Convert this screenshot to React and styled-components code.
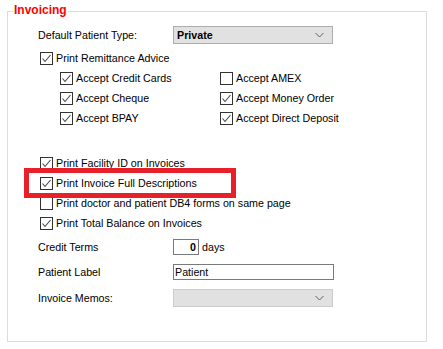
import React from 'react'
import styled, { createGlobalStyle } from 'styled-components'

const Global = createGlobalStyle`
  html, body { margin: 0; padding: 0; background: #ffffff; }
  body { font-family: 'Liberation Sans', Arial, sans-serif; font-size: 10.7px; color: #000; }
`

const Page = styled.div`
  position: relative;
  width: 443px;
  height: 349px;
  padding: 11px 16px 7px 7px;
  box-sizing: border-box;
`

const Group = styled.div`
  position: relative;
  height: 100%;
  border: 1px solid #dcdcdc;
  box-sizing: border-box;
  padding: 14px 0 0 30px;
`

const Legend = styled.div`
  position: absolute;
  left: 5px;
  top: -9px;
  padding: 0 1px;
  background: #fff;
  color: #ff0000;
  font-weight: bold;
  font-size: 12px;
  line-height: 15px;
`

const Row = styled.div`
  display: flex;
  align-items: center;
  height: ${p => p.h || 20}px;
  margin-top: ${p => p.mt || 0}px;
  padding-left: ${p => p.indent || 0}px;
`

const Label = styled.div`
  width: 135px;
  flex-shrink: 0;
`

const Grid = styled.div`
  display: grid;
  grid-template-columns: 160px 1fr;
  padding-left: 21px;
`

const Box = styled.span`
  width: 13px;
  height: 13px;
  box-sizing: border-box;
  border: 1px solid #333;
  background: #fff;
  margin-right: 3px;
  display: inline-flex;
  flex-shrink: 0;
`

const CheckRow = styled.label`
  display: flex;
  align-items: center;
  height: 20px;
  margin-left: 1px;
`

const Combo = styled.div`
  width: 160px;
  height: ${p => p.h || 18}px;
  box-sizing: border-box;
  border: 1px solid ${p => (p.disabled ? '#cccccc' : '#adadad')};
  background: #e1e1e1;
  display: flex;
  align-items: center;
  justify-content: space-between;
  padding: 0 8px 0 3px;
  font-weight: bold;
`

const Field = styled.div`
  width: ${p => p.w}px;
  height: 16px;
  box-sizing: border-box;
  border: 1px solid #7a7a7a;
  background: #fff;
  display: flex;
  align-items: center;
  justify-content: ${p => (p.right ? 'flex-end' : 'flex-start')};
  padding: 0 2px 0 1px;
  font-weight: ${p => (p.bold ? 'bold' : 'normal')};
`

const Suffix = styled.span`
  margin-left: 3px;
`

const Highlight = styled.div`
  position: absolute;
  left: 24px;
  top: 168px;
  width: 212px;
  height: 30px;
  box-sizing: border-box;
  border: 5px solid #e8202a;
  pointer-events: none;
`

function Check({ checked, children }) {
  return (
    <CheckRow>
      <Box>
        {checked && (
          <svg width="11" height="11" viewBox="0 0 11 11">
            <path d="M1.5 5.5 L4 8.5 L9.5 2" fill="none" stroke="#474747" strokeWidth="1.1" />
          </svg>
        )}
      </Box>
      {children}
    </CheckRow>
  )
}

function Chevron() {
  return (
    <svg width="9" height="6" viewBox="0 0 9 6">
      <path d="M0.5 1 L4.5 5 L8.5 1" fill="none" stroke="#606060" strokeWidth="1" />
    </svg>
  )
}

export default function App() {
  return (
    <Page>
      <Global />
      <Group>
        <Legend>Invoicing</Legend>
        <Row h={18}>
          <Label>Default Patient Type:</Label>
          <Combo>
            <span>Private</span>
            <Chevron />
          </Combo>
        </Row>
        <Row mt={4} indent={1}>
          <Check checked>Print Remittance Advice</Check>
        </Row>
        <Grid>
          <Check checked>Accept Credit Cards</Check>
          <Check>Accept AMEX</Check>
          <Check checked>Accept Cheque</Check>
          <Check checked>Accept Money Order</Check>
          <Check checked>Accept BPAY</Check>
          <Check checked>Accept Direct Deposit</Check>
        </Grid>
        <Row mt={25} indent={1}>
          <Check checked>Print Facility ID on Invoices</Check>
        </Row>
        <Row indent={1}>
          <Check checked>Print Invoice Full Descriptions</Check>
        </Row>
        <Row indent={1}>
          <Check>Print doctor and patient DB4 forms on same page</Check>
        </Row>
        <Row indent={1}>
          <Check checked>Print Total Balance on Invoices</Check>
        </Row>
        <Row h={16} mt={6}>
          <Label>Credit Terms</Label>
          <Field w={26} right bold>0</Field>
          <Suffix>days</Suffix>
        </Row>
        <Row h={16} mt={9}>
          <Label>Patient Label</Label>
          <Field w={161}>Patient</Field>
        </Row>
        <Row h={18} mt={9}>
          <Label>Invoice Memos:</Label>
          <Combo disabled>
            <span />
            <Chevron />
          </Combo>
        </Row>
      </Group>
      <Highlight />
    </Page>
  )
}
